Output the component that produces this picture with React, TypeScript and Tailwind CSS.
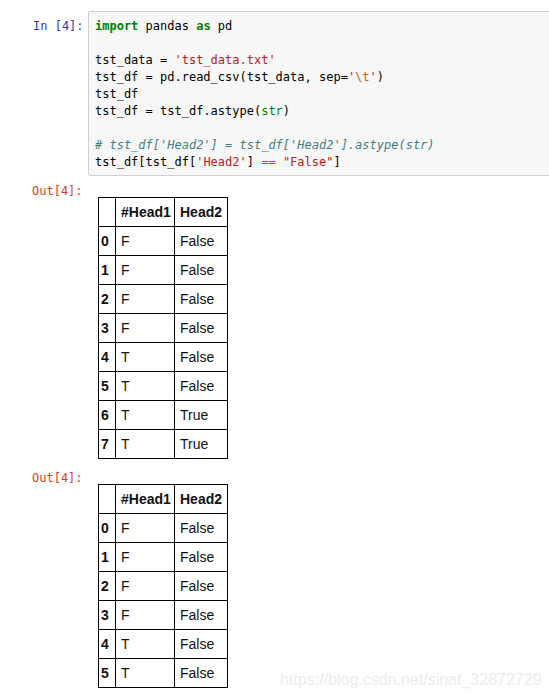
const mono = "font-['DejaVu_Sans_Mono','Liberation_Mono',monospace]";

const rows1: [string, string][] = [
  ["F", "False"],
  ["F", "False"],
  ["F", "False"],
  ["F", "False"],
  ["T", "False"],
  ["T", "False"],
  ["T", "True"],
  ["T", "True"],
];

function Frame({ rows }: { rows: [string, string][] }) {
  return (
    <table className="border-collapse font-['Liberation_Sans',Arial,sans-serif] text-[14px] text-[#111]">
      <thead>
        <tr className="h-[29px]">
          <th className="w-[17px] border border-black p-0"></th>
          <th className="w-[59px] border border-black pl-[5px] text-left font-bold">#Head1</th>
          <th className="w-[53px] border border-black pl-[5px] text-left font-bold">Head2</th>
        </tr>
      </thead>
      <tbody>
        {rows.map(([a, b], i) => (
          <tr key={i} className="h-[29px]">
            <td className="border border-black pl-[2px] font-bold">{i}</td>
            <td className="border border-black pl-[5px]">{a}</td>
            <td className="border border-black pl-[5px]">{b}</td>
          </tr>
        ))}
      </tbody>
    </table>
  );
}

function OutBlock({ rows, className }: { rows: [string, string][]; className: string }) {
  return (
    <div className={`flex ${className}`}>
      <div className={`w-[98px] shrink-0 pl-[32px] ${mono} text-[12px] leading-[17px] text-[#D84315]`}>
        Out[4]:
      </div>
      <div className="pt-[14px]">
        <Frame rows={rows} />
      </div>
    </div>
  );
}

export default function App() {
  const kw = "font-bold text-[#008000]";
  const str = "text-[#BA2121]";
  return (
    <div className="relative h-[699px] w-[549px] overflow-hidden bg-white">
      {/* input cell */}
      <div className="flex pt-[11px]">
        <div className={`w-[88px] shrink-0 pl-[33px] pt-[7px] ${mono} text-[12px] leading-[17px] text-[#303F9F]`}>
          In [4]:
        </div>
        <pre
          className={`w-[480px] shrink-0 rounded-[2px] border border-[#cfcfcf] bg-[#f7f7f7] pl-[6px] pr-[6px] pt-[6px] pb-[4px] ${mono} text-[12px] leading-[17px] text-black`}
        >
          <span className={kw}>import</span> pandas <span className={kw}>as</span> pd{"\n"}
          {"\n"}
          tst_data = <span className={str}>'tst_data.txt'</span>{"\n"}
          tst_df = pd.read_csv(tst_data, sep=<span className={str}>'</span>
          <span className="text-[#BB6622]">\t</span>
          <span className={str}>'</span>){"\n"}
          tst_df{"\n"}
          tst_df = tst_df.astype(<span className="text-[#008000]">str</span>){"\n"}
          {"\n"}
          <span className="italic text-[#408080]"># tst_df['Head2'] = tst_df['Head2'].astype(str)</span>{"\n"}
          tst_df[tst_df[<span className={str}>'Head2'</span>] <span className="text-[#AA22FF]">==</span>{" "}
          <span className={str}>"False"</span>]
        </pre>
      </div>

      <OutBlock rows={rows1} className="mt-[7px]" />
      <OutBlock rows={rows1.slice(0, 6)} className="mt-[11px]" />

      {/* watermark */}
      <div className="absolute left-[280px] top-[670px] font-['Liberation_Sans',Arial,sans-serif] text-[16px] leading-[20px] text-[#ececec]">
        https://blog.csdn.net/sinat_32872729
      </div>
    </div>
  );
}
